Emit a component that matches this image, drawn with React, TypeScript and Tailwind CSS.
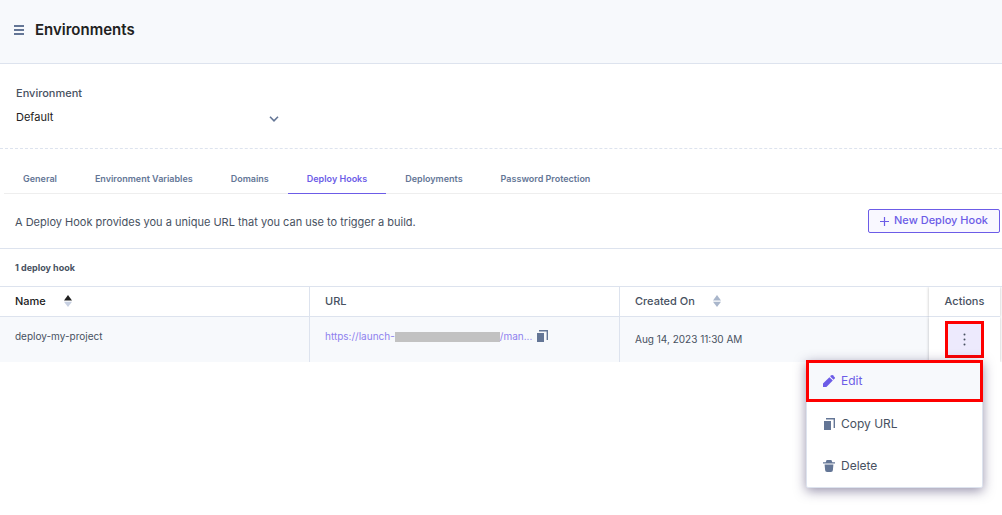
import type { ReactNode } from 'react';
import clsx from 'clsx';

const tabs = [
  'General',
  'Environment Variables',
  'Domains',
  'Deploy Hooks',
  'Deployments',
  'Password Protection',
];

const CopyIcon = () => (
  <svg viewBox="0 0 12 12" className="h-3 w-3 shrink-0" fill="currentColor" aria-hidden="true">
    <path d="M1 3h7v9H1z" />
    <path d="M3 0h9v10h-1.4V1.4H3z" />
  </svg>
);

const EditIcon = () => (
  <svg viewBox="0 0 12 12" className="h-3 w-3 shrink-0" fill="currentColor" aria-hidden="true">
    <path d="M0 8.6 6.4 2.2l3.4 3.4L3.4 12H0z" />
    <path d="M7.2 1.5 8.4.3a1 1 0 0 1 1.4 0l1.9 1.9a1 1 0 0 1 0 1.4l-1.2 1.2z" />
  </svg>
);

const TrashIcon = () => (
  <svg viewBox="0 0 12 12" className="h-3 w-3 shrink-0" fill="currentColor" aria-hidden="true">
    <path d="M3.6 0h4.8l.9 2.2H12v1.2H0V2.2h2.7z" />
    <path d="M1.6 4.4h8.8L9.9 10a2 2 0 0 1-2 2H4.1a2 2 0 0 1-2-2z" />
  </svg>
);

const SortIcon = ({ active }: { active?: boolean }) => (
  <svg viewBox="0 0 8 12" className="h-3 w-2" aria-hidden="true">
    <path d="M4 0 8 5.4H0z" fill={active ? '#212121' : '#a9b6cb'} />
    <path d="M0 6.8h8L4 12z" fill={active ? '#c7d0e1' : '#a9b6cb'} />
  </svg>
);

interface MenuItemProps {
  icon: ReactNode;
  label: string;
  highlighted?: boolean;
}

const MenuItem = ({ icon, label, highlighted }: MenuItemProps) => (
  <button
    type="button"
    role="menuitem"
    className={clsx(
      'flex w-full items-center gap-1.5 px-4 text-xs',
      highlighted
        ? 'mb-0.5 h-10 bg-[#f7f9fc] text-[#6c5ce7] outline-3 outline-[#fe0000] -outline-offset-2'
        : 'h-[42px] text-[#475161]'
    )}
  >
    <span className={highlighted ? 'text-[#6c5ce7]' : 'text-[#647696]'}>{icon}</span>
    {label}
  </button>
);

const App = () => {
  return (
    <div className="min-h-screen bg-white font-['Inter','Liberation_Sans',sans-serif] text-[#475161]">
      <header className="flex h-16 items-center gap-[11px] border-b border-[#dde3ee] bg-[#f7f9fc] px-3.5 pb-1">
        <button type="button" aria-label="Toggle navigation" className="text-[#647696]">
          <svg viewBox="0 0 10 10" className="h-2.5 w-2.5" fill="currentColor" aria-hidden="true">
            <path d="M0 0h10v2H0zM0 4h10v2H0zM0 8h10v2H0z" />
          </svg>
        </button>
        <h1 className="text-[15px] leading-5 font-semibold text-[#212121]">Environments</h1>
      </header>

      <section className="border-b border-dashed border-[#dde3ee] px-4 pt-5 pb-[21px]">
        <label htmlFor="environment" className="block text-[11px] leading-[18px] font-medium">
          Environment
        </label>
        <div className="relative mt-[5px] w-[265px]">
          <select
            id="environment"
            defaultValue="Default"
            className="block h-5 w-full appearance-none text-[11px] text-[#212121]"
          >
            <option>Default</option>
          </select>
          <svg
            viewBox="0 0 10 6"
            className="pointer-events-none absolute top-2 right-0.5 mt-px h-1.5 w-2.5"
            fill="none"
            stroke="#647696"
            strokeWidth="1.6"
            aria-hidden="true"
          >
            <path d="m1 .8 4 4 4-4" />
          </svg>
        </div>
      </section>

      <nav role="tablist" className="mt-4 ml-1 flex border-b border-[#eeeeee]">
        {tabs.map((tab) => (
          <button
            key={tab}
            type="button"
            role="tab"
            aria-selected={tab === 'Deploy Hooks'}
            className={clsx(
              '-mb-px border-b px-[19px] py-[7px] text-[9px] leading-[14px] font-semibold',
              tab === 'Deploy Hooks'
                ? 'border-[#6c5ce7] text-[#6c5ce7]'
                : 'border-transparent text-[#647696]'
            )}
          >
            {tab}
          </button>
        ))}
      </nav>

      <div className="flex h-[55px] items-center justify-between border-b border-[#dde3ee] pr-0.5 pl-[15px]">
        <p className="pt-0.5 text-[11px]">
          A Deploy Hook provides you a unique URL that you can use to trigger a build.
        </p>
        <button
          type="button"
          className="flex h-6 items-center gap-[5px] rounded-xs border border-[#6c5ce7] bg-[#f9f8ff] px-[11px] pb-0.5 text-[11px] font-medium text-[#6c5ce7]"
        >
          <svg viewBox="0 0 9 9" className="mt-0.5 h-[9px] w-[9px]" fill="currentColor" aria-hidden="true">
            <path d="M3.9 0h1.2v3.9H9v1.2H5.1V9H3.9V5.1H0V3.9h3.9z" />
          </svg>
          New Deploy Hook
        </button>
      </div>

      <p className="flex h-[37px] items-center px-[15px] text-[9px] font-bold">1 deploy hook</p>

      <div className="border-t border-[#dde3ee] pr-0.5">
        <table className="w-full table-fixed border-separate border-spacing-0 text-left">
          <colgroup>
            <col className="w-[31%]" />
            <col className="w-[31%]" />
            <col />
            <col className="w-[71px]" />
          </colgroup>
          <thead className="text-[11px] leading-4">
            <tr className="h-[30px]">
              <th
                aria-sort="ascending"
                className="border-r border-b border-[#dde3ee] px-[15px] pb-0.5 font-medium text-[#212121]"
              >
                <button type="button" className="flex items-center gap-[18px]">
                  Name
                  <SortIcon active />
                </button>
              </th>
              <th className="border-r border-b border-[#dde3ee] px-[15px] pb-0.5 font-medium">URL</th>
              <th className="border-b border-[#dde3ee] px-[15px] pb-0.5 font-medium">
                <button type="button" className="flex items-center gap-[18px]">
                  Created On
                  <SortIcon />
                </button>
              </th>
              <th className="border-b border-[#dde3ee] pb-0.5 text-center font-medium shadow-[0_0_3px_rgba(0,0,0,0.25)] [clip-path:inset(0_-3px)]">
                Actions
              </th>
            </tr>
          </thead>
          <tbody className="text-[10px] leading-4">
            <tr className="h-[45px] bg-[#f7f9fc]">
              <td className="border-r border-[#dde3ee] px-[15px] pb-2">deploy-my-project</td>
              <td className="border-r border-[#dde3ee] px-[15px] pb-2">
                <div className="flex items-center">
                  <a href="#hook" className="flex items-center text-[#8e81ee]">
                    https://launch-
                    <span className="mt-0.5 h-2.5 w-[105px] bg-[#c2c2c2]" />
                    /man...
                  </a>
                  <button type="button" aria-label="Copy URL" className="ml-1 text-[#647696]">
                    <CopyIcon />
                  </button>
                </div>
              </td>
              <td className="px-[15px] pb-0.5">Aug 14, 2023 11:30 AM</td>
              <td className="relative bg-white p-0">
                {/* edge shadow of the pinned column */}
                <div className="flex h-[45px] items-center justify-center shadow-[0_0_3px_rgba(0,0,0,0.25)] [clip-path:inset(0_-3px)]">
                  <button
                    type="button"
                    aria-label="Row actions"
                    aria-haspopup="menu"
                    aria-expanded="true"
                    className="flex h-[37px] w-[39px] items-center justify-center border-3 border-[#fe0000] bg-[#edeafd] text-[#475161]"
                  >
                    <svg viewBox="0 0 3 13" className="h-[13px] w-[3px]" fill="currentColor" aria-hidden="true">
                      <circle cx="1.5" cy="1.5" r="1" />
                      <circle cx="1.5" cy="6.5" r="1" />
                      <circle cx="1.5" cy="11.5" r="1" />
                    </svg>
                  </button>
                </div>
                <div
                  role="menu"
                  className="absolute top-[43px] right-[17px] w-[177px] rounded-xs border border-[#dde3ee] bg-white shadow-[0_3px_12px_rgba(50,40,90,0.5)]"
                >
                  <MenuItem icon={<EditIcon />} label="Edit" highlighted />
                  <MenuItem icon={<CopyIcon />} label="Copy URL" />
                  <MenuItem icon={<TrashIcon />} label="Delete" />
                </div>
              </td>
            </tr>
          </tbody>
        </table>
      </div>
    </div>
  );
};

export default App;
